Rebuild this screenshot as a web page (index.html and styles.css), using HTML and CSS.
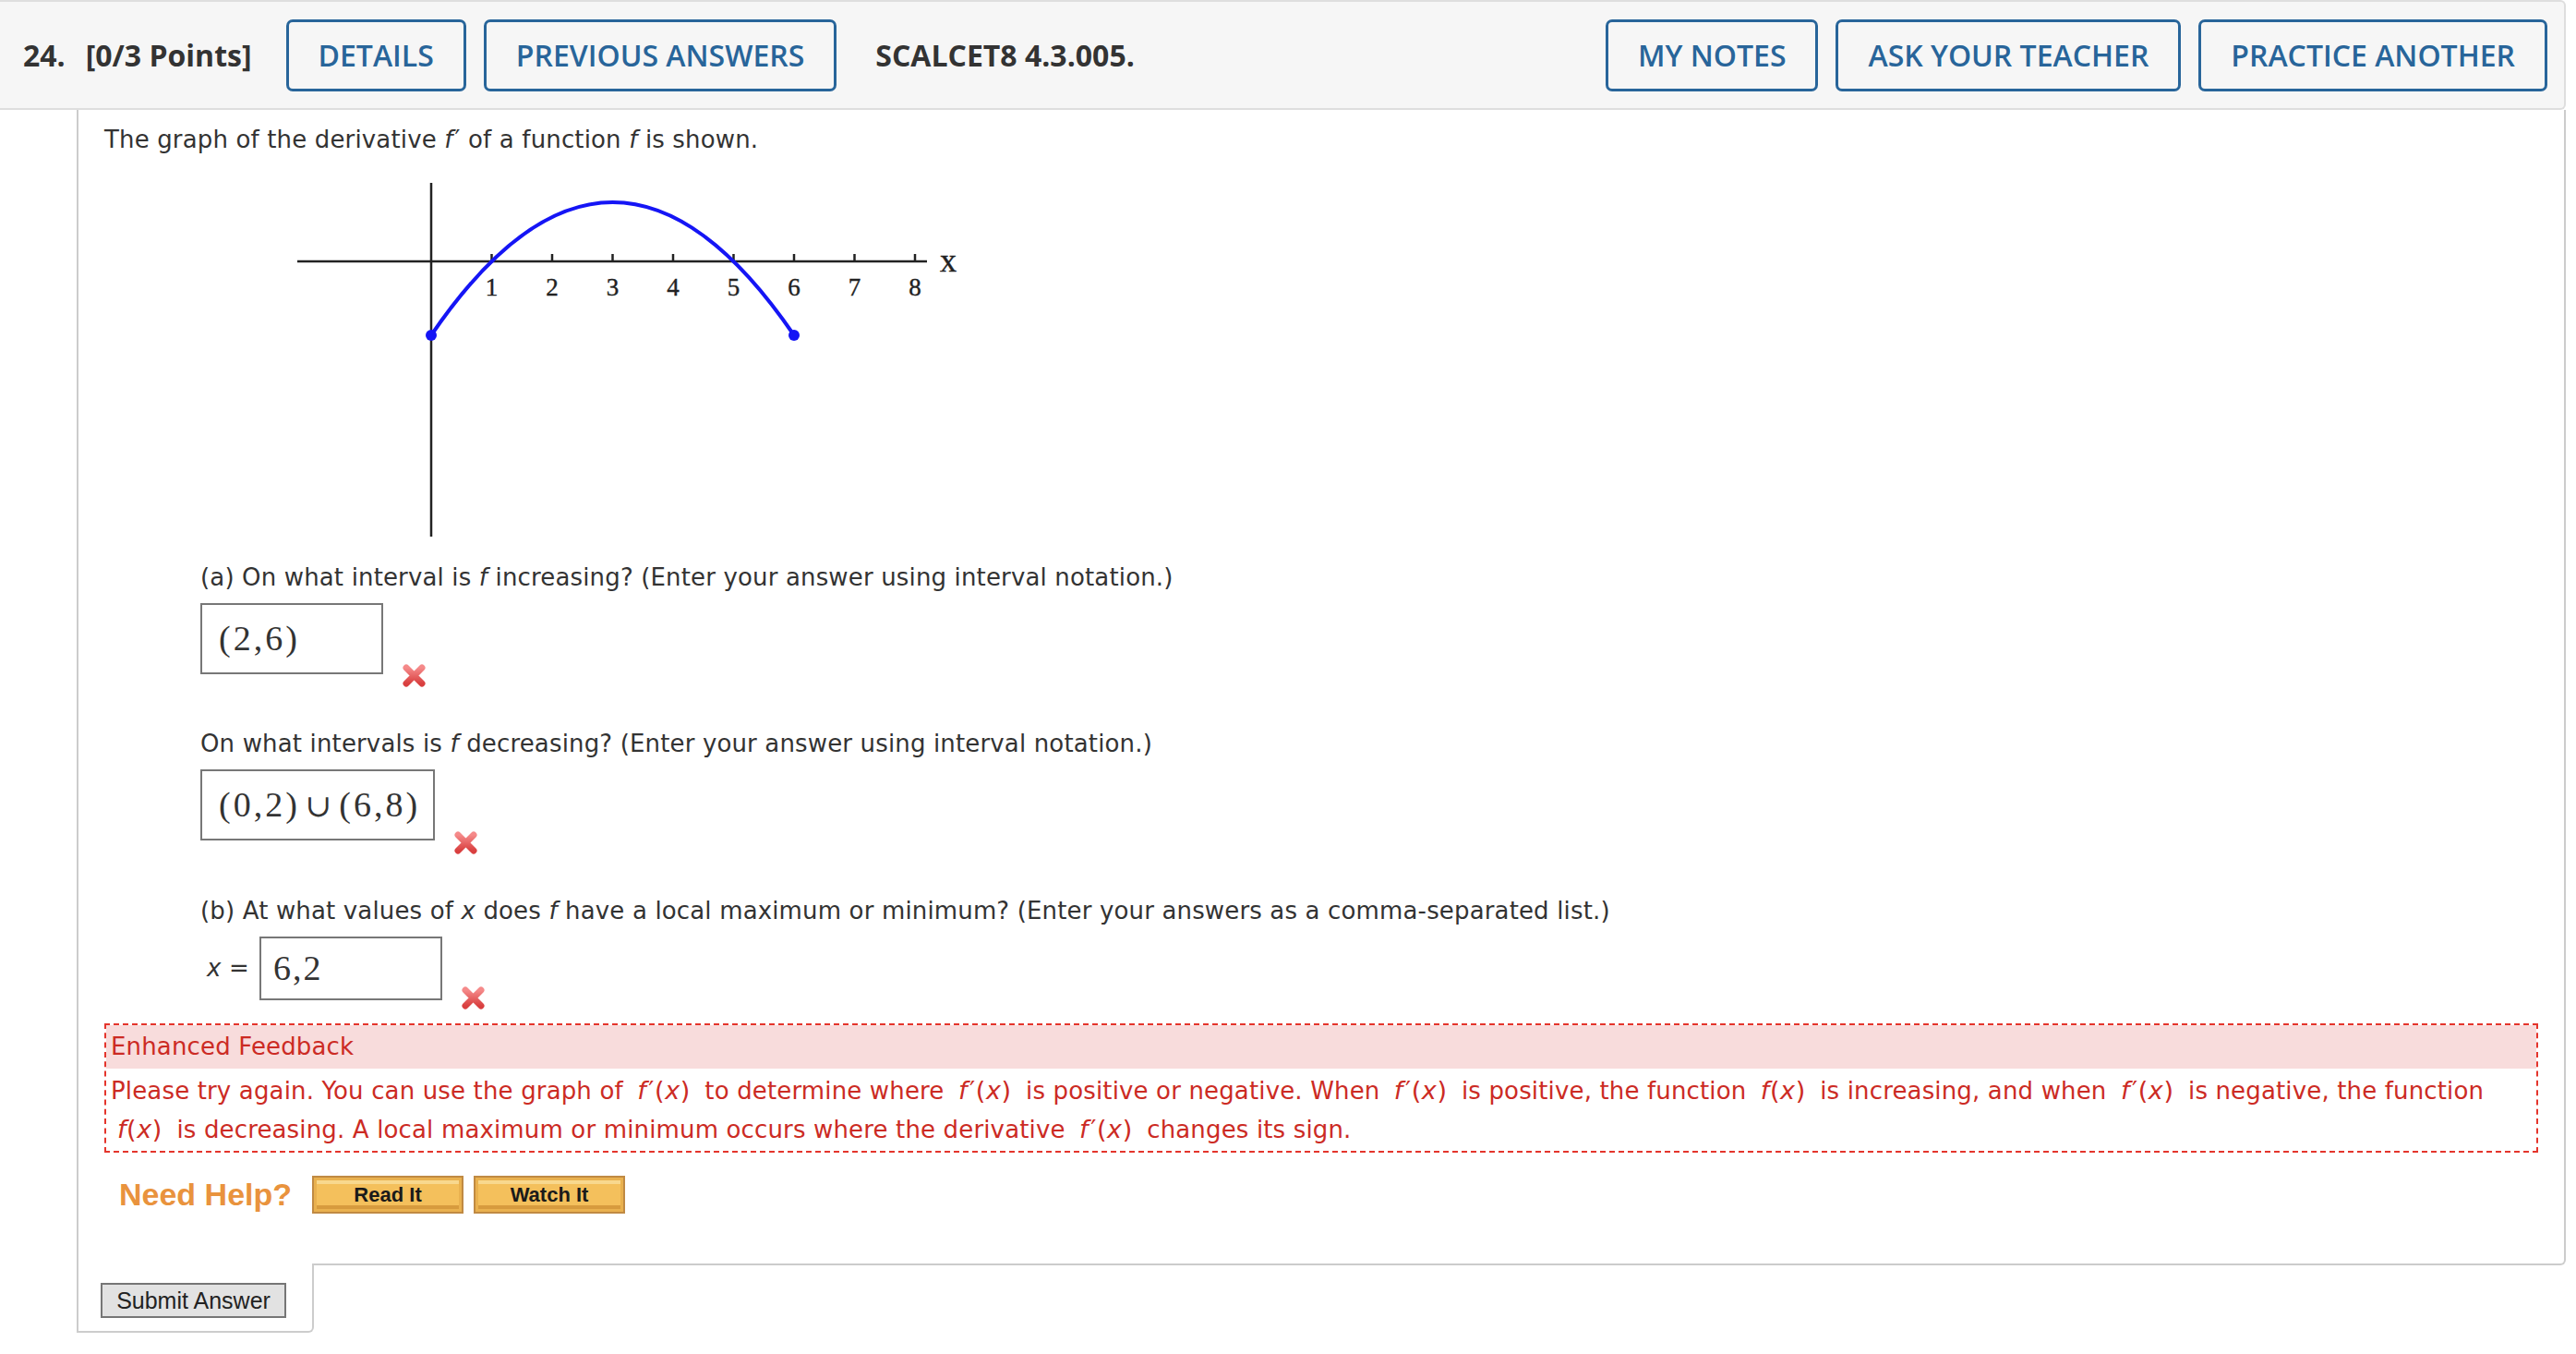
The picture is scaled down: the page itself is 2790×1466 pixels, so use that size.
FILE: index.html
```html
<!DOCTYPE html>
<html lang="en">
<head>
<meta charset="utf-8">
<title>SCALCET8 4.3.005</title>
<link rel="stylesheet" href="styles.css">
</head>
<body>
<div class="page">
  <div class="header">
    <span class="qnum">24.</span>
    <span class="points">[0/3 Points]</span>
    <span class="btn">DETAILS</span>
    <span class="btn">PREVIOUS ANSWERS</span>
    <span class="code">SCALCET8 4.3.005.</span>
    <div class="spacer"></div>
    <span class="btn">MY NOTES</span>
    <span class="btn">ASK YOUR TEACHER</span>
    <span class="btn">PRACTICE ANOTHER</span>
  </div>

  <div class="card">
    <p class="intro">The graph of the derivative <i>f</i><span class="pr">′</span> of a function <i>f</i> is shown.</p>

    <svg class="graph" width="740" height="400" viewBox="0 0 740 400">
      <g stroke="#222" stroke-width="2.5" fill="none">
        <line x1="167" y1="8" x2="167" y2="391"/>
        <line x1="22" y1="93" x2="704" y2="93"/>
        <line x1="232.5" y1="85" x2="232.5" y2="93"/>
        <line x1="298" y1="85" x2="298" y2="93"/>
        <line x1="363.5" y1="85" x2="363.5" y2="93"/>
        <line x1="429" y1="85" x2="429" y2="93"/>
        <line x1="494.5" y1="85" x2="494.5" y2="93"/>
        <line x1="560" y1="85" x2="560" y2="93"/>
        <line x1="625.5" y1="85" x2="625.5" y2="93"/>
        <line x1="691" y1="85" x2="691" y2="93"/>
      </g>
      <g class="ticklabels" fill="#222" stroke="#222" stroke-width="0.4" text-anchor="middle">
        <text x="232.5" y="130">1</text>
        <text x="298" y="130">2</text>
        <text x="363.5" y="130">3</text>
        <text x="429" y="130">4</text>
        <text x="494.5" y="130">5</text>
        <text x="560" y="130">6</text>
        <text x="625.5" y="130">7</text>
        <text x="691" y="130">8</text>
        <text class="xlabel" x="727" y="104">x</text>
      </g>
      <path d="M167 173 Q363.5 -115 560 173" stroke="#1515f5" stroke-width="4" fill="none"/>
      <circle cx="167" cy="173" r="6" fill="#1515f5"/>
      <circle cx="560" cy="173" r="6" fill="#1515f5"/>
    </svg>

    <div class="questions">
      <p class="qtext">(a) On what interval is <i>f</i> increasing? (Enter your answer using interval notation.)</p>
      <div class="answer-row">
        <div class="ans-box w-a"><span class="math">(2,6)</span></div>
        <svg class="xmark xm-a" width="27" height="25" viewBox="0 0 27 25">
          <defs>
            <linearGradient id="xg1" x1="0" y1="0" x2="0" y2="1">
              <stop offset="0" stop-color="#f58a8a"/>
              <stop offset="1" stop-color="#d93f3f"/>
            </linearGradient>
          </defs>
          <path d="M5 4 L22 21 M22 4 L5 21" stroke="url(#xg1)" stroke-width="7" stroke-linecap="round"/>
        </svg>
      </div>

      <p class="qtext q-gap">On what intervals is <i>f</i> decreasing? (Enter your answer using interval notation.)</p>
      <div class="answer-row">
        <div class="ans-box w-b"><span class="math">(0,2)<span class="cup">∪</span>(6,8)</span></div>
        <svg class="xmark xm-b" width="27" height="25" viewBox="0 0 27 25">
          <defs>
            <linearGradient id="xg2" x1="0" y1="0" x2="0" y2="1">
              <stop offset="0" stop-color="#f58a8a"/>
              <stop offset="1" stop-color="#d93f3f"/>
            </linearGradient>
          </defs>
          <path d="M5 4 L22 21 M22 4 L5 21" stroke="url(#xg2)" stroke-width="7" stroke-linecap="round"/>
        </svg>
      </div>

      <p class="qtext q-gap">(b) At what values of <i>x</i> does <i>f</i> have a local maximum or minimum? (Enter your answers as a comma-separated list.)</p>
      <div class="answer-row">
        <div class="labelled">
          <span class="xeq"><i>x</i> =</span>
          <div class="ans-box w-c"><span class="math">6,2</span></div>
        </div>
        <svg class="xmark xm-c" width="27" height="25" viewBox="0 0 27 25">
          <defs>
            <linearGradient id="xg3" x1="0" y1="0" x2="0" y2="1">
              <stop offset="0" stop-color="#f58a8a"/>
              <stop offset="1" stop-color="#d93f3f"/>
            </linearGradient>
          </defs>
          <path d="M5 4 L22 21 M22 4 L5 21" stroke="url(#xg3)" stroke-width="7" stroke-linecap="round"/>
        </svg>
      </div>
    </div>

    <div class="feedback">
      <div class="fb-head">Enhanced Feedback</div>
      <div class="fb-body">Please try again. You can use the graph of <span class="m"><i>f</i><span class="pr">′</span>(<i>x</i>)</span> to determine where <span class="m"><i>f</i><span class="pr">′</span>(<i>x</i>)</span> is positive or negative. When <span class="m"><i>f</i><span class="pr">′</span>(<i>x</i>)</span> is positive, the function <span class="m"><i>f</i>(<i>x</i>)</span> is increasing, and when <span class="m"><i>f</i><span class="pr">′</span>(<i>x</i>)</span> is negative, the function <span class="m"><i>f</i>(<i>x</i>)</span> is decreasing. A local maximum or minimum occurs where the derivative <span class="m"><i>f</i><span class="pr">′</span>(<i>x</i>)</span> changes its sign.</div>
    </div>

    <div class="help">
      <span class="need">Need Help?</span>
      <span class="hbtn">Read It</span>
      <span class="hbtn">Watch It</span>
    </div>
  </div>

  <div class="submit-tab">
    <button class="submit" type="button">Submit Answer</button>
  </div>
</div>
</body>
</html>
```

FILE: styles.css
```css
html, body {
  margin: 0;
  padding: 0;
  background: #ffffff;
}

.page {
  width: 2779px;
  font-family: "DejaVu Sans", Verdana, sans-serif;
  color: #333333;
}

/* ---------- header ---------- */
.header {
  box-sizing: border-box;
  height: 119px;
  display: flex;
  align-items: center;
  gap: 19px;
  padding: 0 18px 0 25px;
  background: #f6f6f6;
  border: 2px solid #dedede;
  border-left: none;
  border-radius: 0 6px 6px 0;
  font-family: "Open Sans", "Liberation Sans", sans-serif;
  font-size: 32px;
  font-weight: 700;
  color: #333333;
}

.qnum {
  margin-right: 3px;
}

.points {
  margin-right: 18px;
}

.code {
  margin-left: 23px;
}

.spacer {
  flex: 1;
}

.btn {
  box-sizing: border-box;
  height: 78px;
  display: flex;
  align-items: center;
  padding: 0 32px;
  border: 3px solid #28659a;
  border-radius: 7px;
  color: #28659a;
  font-weight: 600;
  white-space: nowrap;
}

/* ---------- card ---------- */
.card {
  margin-left: 83px;
  padding: 13px 28px 54px 28px;
  border-left: 2px solid #cccccc;
  border-right: 2px solid #cccccc;
  border-bottom: 2px solid #cccccc;
  border-radius: 0 0 6px 0;
  font-size: 26px;
  line-height: 39px;
  letter-spacing: 0.15px;
}

.intro {
  margin: 0;
}

.pr {
  margin-left: 2px;
}

.graph {
  display: block;
  margin: 19px 0 0 187px;
}

.ticklabels {
  font-family: "Liberation Serif", "Times New Roman", serif;
  font-size: 27px;
}

.xlabel {
  font-size: 36px;
}

/* ---------- questions ---------- */
.questions {
  padding-left: 104px;
  margin-top: 16px;
}

.qtext {
  margin: 0;
}

.q-gap {
  margin-top: 42px;
}

.answer-row {
  display: flex;
  align-items: flex-start;
  margin-top: 8px;
}

.ans-box {
  box-sizing: border-box;
  height: 77px;
  border: 2px solid #777777;
  padding: 16px 0 0 18px;
  font-family: "Liberation Serif", "Times New Roman", serif;
  font-size: 38px;
  line-height: 40px;
  letter-spacing: 3px;
  color: #333333;
  white-space: nowrap;
}

.w-a { width: 198px; }
.w-b { width: 254px; }
.w-c { width: 198px; height: 69px; padding-top: 12px; padding-left: 13px; letter-spacing: 2px; }

.cup {
  font-family: "DejaVu Serif", "DejaVu Sans", serif;
  font-size: 34px;
  letter-spacing: 0;
  margin: 0 8px 0 6px;
}

.labelled {
  display: flex;
  align-items: center;
}

.xeq {
  padding-left: 7px;
  width: 64px;
  box-sizing: border-box;
}

.xmark {
  display: block;
  margin-left: 20px;
}

.xm-a { margin-top: 66px; }
.xm-b { margin-top: 67px; }
.xm-c { margin-top: 54px; }

/* ---------- feedback ---------- */
.feedback {
  margin-top: 15px;
  border: 2px dashed #e4352c;
  color: #cc2b24;
}

.fb-head {
  background: #f8dcdc;
  padding-left: 5px;
  line-height: 47px;
}

.fb-body {
  padding: 3px 5px 2px 5px;
  line-height: 41px;
}

.m {
  margin: 0 7px;
  white-space: nowrap;
  font-size: 27px;
  letter-spacing: 0.6px;
}

/* ---------- need help ---------- */
.help {
  display: flex;
  align-items: center;
  margin-top: 25px;
  padding-left: 16px;
  height: 41px;
}

.need {
  font-family: "Liberation Sans", Arial, sans-serif;
  font-size: 34px;
  font-weight: 700;
  letter-spacing: 0;
  color: #e9933d;
  margin-right: 22px;
}

.hbtn {
  box-sizing: border-box;
  height: 41px;
  width: 164px;
  display: flex;
  align-items: center;
  justify-content: center;
  margin-right: 11px;
  background: #f4c05c;
  border: 2px solid #c08a43;
  box-shadow: inset 0 0 0 3px #e9b14f, inset 0 4px 0 3px #f8d88e, inset 0 -4px 0 3px #d79b3e;
  font-family: "Liberation Sans", Arial, sans-serif;
  font-size: 22px;
  font-weight: 700;
  letter-spacing: 0;
  color: #1a1a1a;
}

/* ---------- submit tab ---------- */
.submit-tab {
  box-sizing: border-box;
  width: 257px;
  height: 75px;
  margin: -2px 0 0 83px;
  padding: 21px 0 0 24px;
  background: #ffffff;
  border-left: 2px solid #cccccc;
  border-right: 2px solid #cccccc;
  border-bottom: 2px solid #cccccc;
  border-radius: 0 0 6px 0;
  position: relative;
}

.submit {
  box-sizing: border-box;
  width: 201px;
  height: 38px;
  padding: 0;
  background: #e2e2e2;
  border: 2px solid #767676;
  border-radius: 0;
  font-family: "Liberation Sans", Arial, sans-serif;
  font-size: 25px;
  color: #222222;
}
```
